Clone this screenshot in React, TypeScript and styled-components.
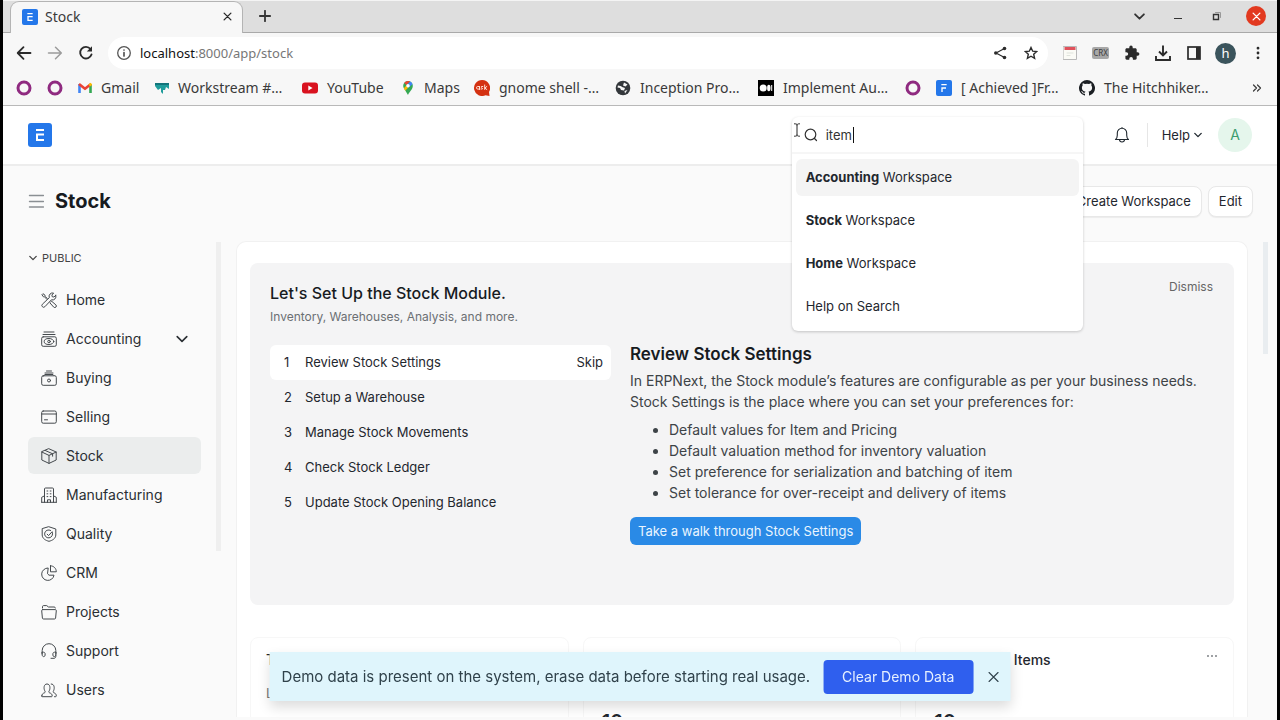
import React from "react";
import styled, { createGlobalStyle } from "styled-components";

const Global = createGlobalStyle`
  *, *::before, *::after { box-sizing: border-box; }
  html, body, #root { height: 100%; }
  body { margin: 0; background: #000; font-family: Inter, "Liberation Sans", sans-serif; color: #1f272e; }
  button, input { font: inherit; color: inherit; }
  h1, h2, h3, p, ul, ol { margin: 0; padding: 0; font-weight: inherit; }
  a { color: inherit; text-decoration: none; }
`;

const ubuntu = `"Noto Sans", "Open Sans", sans-serif`;

/* ---------- shared ---------- */
const Glyph = styled.svg.attrs<{ $size?: number }>((p) => ({
  fill: p.fill ?? "none",
  stroke: p.stroke ?? "currentColor",
  strokeLinecap: p.strokeLinecap ?? "round",
  strokeLinejoin: p.strokeLinejoin ?? "round",
}))<{ $size?: number }>`
  display: block;
  flex: none;
  width: ${(p) => p.$size ?? 16}px;
  height: ${(p) => p.$size ?? 16}px;
`;

const PlainButton = styled.button`
  display: flex;
  align-items: center;
  justify-content: center;
  border: 0;
  padding: 0;
  background: none;
`;

const Window = styled.div`
  height: 100vh;
  display: flex;
  flex-direction: column;
  overflow: hidden;
  border: solid #000;
  border-width: 0 3px;
  background: #fafafa;
`;

/* ---------- browser chrome ---------- */
const TabStrip = styled.div`
  flex: none;
  display: flex;
  align-items: flex-end;
  height: 33px;
  padding: 0 11px 0 7px;
  border-top: 1px solid #f4f4f4;
  background: #dedede;
  box-shadow: inset 0 -1px #a9a9a9;
  font-family: ${ubuntu};
`;

const Tab = styled.div`
  display: flex;
  align-items: center;
  width: 233px;
  height: 32px;
  padding: 0 5px 2px 11px;
  border: 1px solid #b4b4b4;
  border-bottom: 0;
  border-radius: 9px 9px 0 0;
  background: #f7f7f7;
  font-size: 14px;
`;

const TabTitle = styled.span`
  flex: 1;
  padding-left: 7px;
  color: #3a3a3a;
`;

const WindowControls = styled.div`
  display: flex;
  align-items: center;
  align-self: center;
  gap: 19px;
  margin: 0 0 2px auto;
`;

const ControlButton = styled(PlainButton)`
  width: 20px;
  height: 20px;
  color: #333;
`;

const CloseWindow = styled(ControlButton)`
  border-radius: 50%;
  background: #e2391f;
  color: #fff;
`;

const NewTab = styled(ControlButton)`
  align-self: center;
  margin: 0 0 2px 12px;
`;

const Toolbar = styled.div`
  flex: none;
  display: flex;
  align-items: center;
  gap: 12px;
  height: 40px;
  padding: 0 10px 0 11px;
  background: #f7f7f7;
`;

const ToolButton = styled(PlainButton)<{ $dim?: boolean }>`
  width: 19px;
  height: 24px;
  color: ${(p) => (p.$dim ? "#9c9c9c" : "#2b2b2b")};
`;

const AddressBar = styled.div`
  flex: 1;
  display: flex;
  align-items: center;
  gap: 12px;
  height: 32px;
  margin-left: 1px;
  padding: 0 8px;
  border-radius: 16px;
  background: #fff;
  font: 13px ${ubuntu};
  color: #777;
`;

const Url = styled.a`
  flex: 1;
  margin-left: -4px;
  b { font-weight: 400; color: #111; }
`;

const Profile = styled(PlainButton)`
  width: 21px;
  height: 21px;
  border-radius: 50%;
  background: #3b545c;
  color: #fff;
  font: 13px ${ubuntu};
`;

const CrxBadge = styled.span`
  width: 17px;
  border-radius: 2px;
  background: #a7a7a7;
  color: #3c3c3c;
  font: 8px/12px ${ubuntu};
  text-align: center;
`;

const Bookmarks = styled.nav`
  flex: none;
  display: flex;
  align-items: center;
  gap: 15px;
  height: 33px;
  padding: 0 15px 3px 13px;
  border-bottom: 1px solid #b9b9b9;
  background: #f7f7f7;
  font: 14px ${ubuntu};
  color: #3a3a3a;
`;

const Bookmark = styled.a<{ $width?: number }>`
  flex: none;
  display: flex;
  align-items: center;
  gap: 9px;
  width: ${(p) => p.$width ?? 16}px;
  white-space: nowrap;
`;

const More = styled(PlainButton)`
  margin-left: auto;
`;

/* ---------- app header ---------- */
const Header = styled.header`
  flex: none;
  display: flex;
  align-items: center;
  height: 60px;
  padding: 0 25px;
  border-bottom: 2px solid #ededed;
  background: #fff;
`;

const Search = styled.div`
  position: relative;
  width: 291px;
  margin: 0 31px 0 auto;
`;

const SearchField = styled.label`
  display: flex;
  align-items: center;
  gap: 8px;
  height: 36px;
  padding: 0 12px;
  font-size: 13px;
  color: #333;
`;

const SearchInput = styled.input`
  width: 200px;
  border: 0;
  padding: 0;
  outline: 0;
  background: none;
`;

const Typed = styled.span`
  position: relative;
`;

const Caret = styled.i`
  position: absolute;
  left: 27px;
  top: 0;
  width: 1px;
  height: 16px;
  background: #111;
`;

const Pointer = styled(Glyph)`
  position: absolute;
  left: -2px;
  top: 6px;
`;

const Suggestions = styled.ul`
  position: absolute;
  z-index: 3;
  top: 0;
  left: 0;
  right: 0;
  padding: 42px 4px 6px;
  border-radius: 6px;
  background: linear-gradient(#f6f6f6, #f6f6f6) 0 35px / 100% 2px no-repeat, #fff;
  box-shadow: 0 1px 3px rgba(0, 0, 0, 0.2);
  list-style: none;
  font-size: 13px;
`;

const Field = styled.div`
  position: relative;
  z-index: 4;
`;

const Suggestion = styled.li<{ $active?: boolean }>`
  padding: 0 10px;
  border-radius: 6px;
  line-height: 37px;
  background: ${(p) => (p.$active ? "#f4f4f4" : "none")};
  & + & { margin-top: 6px; }
  b { font-weight: 700; }
`;

const Divider = styled.i`
  width: 1px;
  height: 24px;
  margin: 0 14px 0 17px;
  background: #e6e6e6;
`;

const HelpButton = styled(PlainButton)`
  gap: 4px;
  margin-right: 16px;
  font-size: 13px;
`;

const Avatar = styled.span`
  width: 34px;
  border-radius: 50%;
  background: #e5f6ec;
  color: #3c9d6f;
  font-size: 14px;
  line-height: 34px;
  text-align: center;
`;

/* ---------- page ---------- */
const PageHead = styled.div`
  flex: none;
  display: flex;
  align-items: center;
  gap: 6px;
  height: 70px;
  padding: 0 24px 0 25px;
`;

const PageTitle = styled.h1`
  flex: 1;
  padding-left: 5px;
  font-size: 20px;
  font-weight: 700;
  color: #171b1f;
`;

const HeadButton = styled.button`
  height: 31px;
  padding: 0 10px;
  border: 1px solid #e8e8e8;
  border-radius: 8px;
  background: #fff;
  box-shadow: 0 1px 1px rgba(0, 0, 0, 0.06);
  font-size: 13px;
`;

const Body = styled.div`
  flex: 1;
  min-height: 0;
  display: flex;
  padding: 0 0 3px 25px;
`;

const Sidebar = styled.aside`
  flex: none;
  width: 173px;
  padding-top: 14px;
  overflow: hidden;
`;

const SectionToggle = styled(PlainButton)`
  gap: 5px;
  height: 16px;
  margin: 0 0 15px 1px;
  font-size: 11px;
  color: #444;
`;

const NavItem = styled.a<{ $active?: boolean }>`
  display: flex;
  align-items: center;
  gap: 9px;
  height: 37px;
  margin-bottom: 2px;
  padding: 0 13px;
  border-radius: 6px;
  background: ${(p) => (p.$active ? "#ebeded" : "none")};
  font-size: 14px;
  color: #2a2f33;
`;

const NavLabel = styled.span`
  flex: 1;
`;

const Scrollbar = styled.i<{ $length: number; $tone: string; $after: number }>`
  flex: none;
  width: 5px;
  height: ${(p) => p.$length}px;
  margin: 6px ${(p) => p.$after}px 0 15px;
  background: ${(p) => p.$tone};
`;

const Board = styled.main`
  flex: 1;
  min-width: 0;
  margin-top: 5px;
  padding: 21px 13px 0;
  border: 1px solid #f1f1f1;
  border-bottom: 0;
  border-radius: 10px 10px 0 0;
  background: #fff;
  overflow: hidden;
`;

const Onboarding = styled.section`
  min-height: 342px;
  padding: 19px 20px;
  border-radius: 8px;
  background: #f4f4f5;
`;

const OnboardingHead = styled.div`
  display: flex;
  justify-content: space-between;
  align-items: flex-start;
`;

const OnboardingTitle = styled.h2`
  font-size: 16px;
  line-height: 22px;
  font-weight: 500;
  color: #171b1f;
`;

const Subtitle = styled.p`
  padding-top: 4px;
  font-size: 12px;
  line-height: 17px;
  color: #6b6f73;
`;

const Dismiss = styled(PlainButton)`
  margin: -3px 1px 0 0;
  font-size: 12px;
  line-height: 16px;
  color: #666;
`;

const Columns = styled.div`
  display: grid;
  grid-template-columns: 341px 1fr;
  gap: 19px;
  margin-top: 20px;
`;

const Steps = styled.ol`
  list-style: none;
`;

const Step = styled.li<{ $active?: boolean }>`
  display: flex;
  height: 35px;
  line-height: 35px;
  padding: 0 8px 0 14px;
  border-radius: 6px;
  background: ${(p) => (p.$active ? "#fff" : "none")};
  font-size: 13px;
`;

const StepNumber = styled.span`
  width: 21px;
`;

const StepName = styled.span`
  flex: 1;
`;

const Detail = styled.div`
  font-size: 14px;
  line-height: 21px;
  color: #3d4347;
`;

const DetailTitle = styled.h3`
  margin-bottom: 7px;
  font-size: 17px;
  line-height: 18px;
  font-weight: 600;
  color: #171b1f;
`;

const Bullets = styled.ul`
  margin: 7px 0 14px;
  padding-left: 39px;
`;

const Walkthrough = styled.button`
  height: 28px;
  padding: 0 8px;
  border: 0;
  border-radius: 6px;
  background: #2a8ae6;
  color: #e9f5ff;
  font-size: 13px;
`;

const Cards = styled.div`
  display: grid;
  grid-template-columns: repeat(3, 1fr);
  gap: 14px;
  margin-top: 32px;
`;

const Card = styled.section`
  height: 120px;
  padding: 12px 15px;
  border: 1px solid #f7f7f7;
  border-radius: 8px;
`;

const CardHead = styled.div`
  display: flex;
  justify-content: space-between;
  font-size: 14px;
  line-height: 20px;
  font-weight: 500;
`;

const CardNumber = styled.p`
  padding: 40px 3px 0;
  font-size: 20px;
  line-height: 24px;
  font-weight: 600;
`;

const CardNote = styled.p`
  padding-top: 13px;
  font-size: 13px;
  line-height: 20px;
  color: #777;
`;

const CardMenu = styled(PlainButton)`
  height: 12px;
`;

const Toast = styled.div`
  position: fixed;
  z-index: 5;
  left: 50%;
  bottom: 19px;
  transform: translateX(-50%);
  display: flex;
  align-items: center;
  height: 49px;
  padding: 0 11px 0 12px;
  background: #dff5fc;
  box-shadow: 0 6px 12px rgba(0, 0, 0, 0.14);
  font-size: 15px;
  white-space: nowrap;
  color: #30424b;
`;

const ClearButton = styled.button`
  height: 34px;
  margin: 0 14px 0 13px;
  padding: 0 19px;
  border: 0;
  border-radius: 4px;
  background: #2f5fee;
  color: #e6f0ff;
  font-size: 14px;
`;

/* ---------- icons ---------- */
const Brand = ({ size, letter = "E" }: { size: number; letter?: "E" | "F" }) => (
  <Glyph $size={size} viewBox="0 0 24 24">
    <rect width="24" height="24" rx="3" fill="#2477ea" stroke="none" />
    <path
      d={letter === "E" ? "M8 7h8M16 11.5H9V17h7" : "M8 7h8M15 12H9v6"}
      stroke="#fff" strokeWidth="2" strokeLinecap="butt" strokeLinejoin="miter"
    />
  </Glyph>
);

const Ring = () => (
  <Glyph viewBox="0 0 16 16"><circle cx="8" cy="8" r="6" stroke="#8f2a80" strokeWidth="3" /></Glyph>
);

const Chevron = ({ size = 8, weight = 1.3 }: { size?: number; weight?: number }) => (
  <Glyph $size={size} viewBox="0 0 8 8"><path d="M.8 2.4 4 5.6l3.2-3.2" strokeWidth={weight} vectorEffect="non-scaling-stroke" /></Glyph>
);

const Cross = ({ size, weight }: { size: number; weight: number }) => (
  <Glyph $size={size} viewBox="0 0 12 12"><path d="M1.5 1.5l9 9M10.5 1.5l-9 9" strokeWidth={weight} /></Glyph>
);

const navIcons: Record<string, React.ReactNode> = {
  Home: (
    <>
      <path d="M6.2 6.400 4.200 4.400 4 3.200 1.900 1.700.9 2.700 2.400 4.800l1.200.2 2 2M9.600 10.200l1-1 4.300 3.700a1.500 1.500 0 0 1-2.200 2.200L9 11" />
      <path d="M14.800 3.400 12.900 5l-1.700-.300-.300-1.700 1.700-1.900a3.500 3.500 0 0 0-4.300 4.600L1.400 12.200a1.700 1.700 0 0 0 2.500 2.500l6.500-6.900a3.500 3.500 0 0 0 4.400-4.400Z" />
    </>
  ),
  Accounting: (
    <>
      <path d="M3 1h10M2 3.500h12" />
      <rect x=".7" y="5.800" width="14.600" height="9.500" rx="1.500" />
      <ellipse cx="8" cy="10.500" rx="4.800" ry="3" />
      <circle cx="8" cy="10.500" r="1.300" />
    </>
  ),
  Buying: (
    <>
      <path d="M5.500 1h5M4 3h8M3 5.500 4 4.500h8l1 1" />
      <rect x=".7" y="5.800" width="14.600" height="9.500" rx="1.500" />
      <circle cx="8" cy="10.500" r="1.500" />
    </>
  ),
  Selling: (
    <>
      <rect x=".7" y="2" width="14.600" height="12.200" rx="1.500" />
      <path d="M.7 5h14.600M3.500 10.800h3" />
    </>
  ),
  Stock: (
    <path d="M8 .8 15.200 4v8L8 15.400.8 12V4ZM.8 4 8 7.400 15.200 4M8 7.400v8M4.300 2.500l7.300 3.300v2.400" />
  ),
  Manufacturing: (
    <>
      <path d="M3.500 15.300V2a1 1 0 0 1 1-1h7a1 1 0 0 1 1 1v13.300M.7 15.300v-5l2.800-1.500M15.300 15.300v-5l-2.800-1.500M.7 15.300h14.600M6.500 15.300v-2.500h3v2.500" />
      <path d="M6 4h.8M9.200 4h.8M6 6.800h.8M9.200 6.800h.8M6 9.600h.8M9.200 9.600h.8" />
    </>
  ),
  Quality: (
    <>
      <path d="M8 .8 14.800 3v6c0 3.500-3.500 5.500-6.800 6.300C4.700 14.500 1.200 12.500 1.200 9V3Z" />
      <path d="M11.300 6.300a4 4 0 1 1-1.700-1.900M6.200 8.200l1.400 1.400L11 5.800" />
    </>
  ),
  CRM: (
    <>
      <path d="M6.800 3A6.200 6.200 0 1 0 13 10.200H8L6.800 9Z" />
      <path d="M9.500.8v6h5.800C15.300 3.500 12.800.8 9.500.8Z" />
    </>
  ),
  Projects: (
    <>
      <path d="M1.500 4V2.600c0-.6.400-1 1-1h3.200L7.500 3h5.700c.7 0 1.200.5 1.200 1" />
      <path d="M1.700 5.600h12.600c.7 0 1.100.5 1 1.100l-.7 7.300c0 .6-.5 1-1.100 1h-11c-.6 0-1.100-.4-1.100-1L.7 6.700c0-.6.400-1.100 1-1.100Z" />
    </>
  ),
  Support: (
    <>
      <path d="M1.200 11V7.500a6.800 6.800 0 0 1 13.600 0V11M14.800 12v1.500c0 1-.8 1.800-1.800 1.800h-3" />
      <path d="M1.200 9.200h1.300c.9 0 1.600.7 1.600 1.600v1.400c0 .8-.6 1.400-1.400 1.400-.8 0-1.500-.6-1.500-1.400ZM14.800 9.200h-1.300c-.9 0-1.600.7-1.600 1.600v1.400c0 .8.6 1.400 1.400 1.400.8 0 1.500-.6 1.500-1.400Z" />
    </>
  ),
  Users: (
    <>
      <path d="M.8 14c0-2 1.200-2.700 2.900-3.300.8-.4.500-1.300 0-2C2.600 6.500 2.700 2 6 2s3.400 4.500 2.300 6.700c-.5.700-.8 1.600 0 2 1.700.6 2.900 1.300 2.900 3.300 0 .4-.3.700-.7.700h-9c-.4 0-.7-.3-.7-.7Z" />
      <path d="M10.200 2c3.200-.3 3.600 4.200 2.400 6.700-.4.700-.6 1.500.1 2 1.600.6 2.600 1.300 2.600 3.200 0 .5-.3.800-.8.800h-1" />
    </>
  ),
};

const bookmarks: { label?: string; width?: number; icon: React.ReactNode }[] = [
  { icon: <Ring /> },
  { icon: <Ring /> },
  {
    label: "Gmail", width: 62,
    icon: (
      <Glyph $size={14} viewBox="0 0 14 14" strokeWidth="2.6" strokeLinecap="butt">
        <path d="M1.500 12V3" stroke="#4285f4" /><path d="M12.500 12V3" stroke="#34a853" />
        <path d="M1 3l6 4.800L13 3" stroke="#ea4335" /><path d="M11.200 4.500 13.500 2.700" stroke="#fbbc04" />
      </Glyph>
    ),
  },
  {
    label: "Workstream #…", width: 132,
    icon: (
      <Glyph $size={14} viewBox="0 0 14 14" stroke="none">
        <path d="M0 2h14v6l-3-2-1 3H8v4l-2-2V7L3 9 0 5Z" fill="#1f9c9b" /><path d="M0 2h14v2H0Z" fill="#12747a" />
      </Glyph>
    ),
  },
  {
    label: "YouTube", width: 84,
    icon: (
      <Glyph viewBox="0 0 16 16" stroke="none">
        <rect y="2.500" width="16" height="11" rx="3" fill="#d9121f" /><path d="M6.300 5.500v5l4.300-2.500Z" fill="#fff" />
      </Glyph>
    ),
  },
  {
    label: "Maps", width: 58,
    icon: (
      <Glyph $size={14} viewBox="1 0 14 16" stroke="none">
        <path d="M8 0a5.500 5.500 0 0 0-5.500 5.500c0 1 .3 2 .8 2.800L8 16c.8-3 5.500-6 5.500-10.500A5.500 5.500 0 0 0 8 0Z" fill="#34a853" />
        <path d="M8 0a5.500 5.500 0 0 0-4.300 2L6 4.500 10.500.6A5.500 5.500 0 0 0 8 0Z" fill="#ea4335" />
        <path d="M10.500.6 6 5.500l2 2.500 5.200-4.300A5.500 5.500 0 0 0 10.500.6Z" fill="#4285f4" />
        <path d="M3.300 8.300 6 5l2 2.800-3.200 3.300Z" fill="#fbbc04" /><circle cx="8" cy="5.500" r="2" fill="#fff" />
      </Glyph>
    ),
  },
  {
    label: "gnome shell -…", width: 126,
    icon: (
      <Glyph viewBox="0 0 16 16" stroke="none">
        <path d="M8 0a8 8 0 1 0 3.500 15.200l4 .8-.5-4A8 8 0 0 0 8 0Z" fill="#d43111" />
        <path d="M5.500 6.500H3.800a1.300 1.300 0 0 0 0 2.600h1.700V6.500v3M8.800 6.500H7.400c-1 1.300 1.400 1 1 2.500H7M10.700 5v4.500M12.800 6.500l-2 1.500 2 1.500" fill="none" stroke="#ffe0d6" />
      </Glyph>
    ),
  },
  {
    label: "Inception Pro…", width: 128,
    icon: (
      <Glyph viewBox="0 0 16 16" stroke="none">
        <circle cx="8" cy="8" r="7.300" fill="#33373b" />
        <path d="M3 5.500c2 .5 3 0 4 1.500l3 1-1 2.500-3-.5-1-2-2.500-.5ZM9 2.500l3.500 2-2 2-2.500-1ZM9.500 11l3-1-2.500 3.500Z" fill="#f7f7f7" />
      </Glyph>
    ),
  },
  {
    label: "Implement Au…", width: 132,
    icon: (
      <Glyph viewBox="0 0 16 16" stroke="none">
        <rect width="16" height="16" fill="#000" /><circle cx="5.200" cy="8" r="3.500" fill="#fff" />
        <ellipse cx="10.800" cy="8" rx="1.700" ry="3.200" fill="#fff" /><rect x="13.200" y="5" width="1" height="6" fill="#fff" />
      </Glyph>
    ),
  },
  { icon: <Ring /> },
  { label: "[ Achieved ]Fr…", width: 128, icon: <Brand size={16} letter="F" /> },
  {
    label: "The Hitchhiker…", width: 136,
    icon: (
      <Glyph viewBox="0 0 16 16" stroke="none">
        <path
          fill="#1b1f23"
          d="M8 0a8 8 0 0 0-2.500 15.600c.4.100.5-.2.500-.4v-1.500c-2.200.5-2.700-.9-2.700-.9-.4-.9-.9-1.200-.9-1.200-.7-.5.100-.5.100-.5.800.1 1.200.8 1.200.8.700 1.200 1.900.9 2.300.7.100-.5.300-.9.500-1.100-1.800-.2-3.600-.9-3.600-4 0-.9.300-1.600.8-2.100-.1-.2-.4-1 .1-2.100 0 0 .7-.2 2.200.8a7.600 7.600 0 0 1 4 0c1.500-1 2.200-.8 2.200-.8.400 1.100.2 1.900.1 2.100.5.600.8 1.300.8 2.100 0 3.100-1.900 3.800-3.700 4 .3.300.6.800.6 1.500v2.200c0 .2.100.5.500.4A8 8 0 0 0 8 0Z"
        />
      </Glyph>
    ),
  },
];

const suggestions = [
  ["Accounting", " Workspace"],
  ["Stock", " Workspace"],
  ["Home", " Workspace"],
  ["", "Help on Search"],
];

const steps = [
  "Review Stock Settings",
  "Setup a Warehouse",
  "Manage Stock Movements",
  "Check Stock Ledger",
  "Update Stock Opening Balance",
];

const Dots = () => (
  <Glyph $size={12} viewBox="0 0 12 12" strokeWidth="1.600"><path d="M2 6h.01M6 6h.01M10 6h.01" /></Glyph>
);

function BrowserChrome() {
  return (
    <>
      <TabStrip>
        <Tab>
          <Brand size={16} />
          <TabTitle>Stock</TabTitle>
          <ToolButton aria-label="Close tab"><Cross size={9} weight={1.8} /></ToolButton>
        </Tab>
        <NewTab aria-label="New tab">
          <Glyph $size={12} viewBox="0 0 12 12" strokeWidth="1.800"><path d="M6 .8v10.400M.8 6h10.400" /></Glyph>
        </NewTab>
        <WindowControls>
          <ControlButton aria-label="Search tabs"><Chevron size={11} weight={1.8} /></ControlButton>
          <ControlButton aria-label="Minimize">
            <Glyph $size={12} viewBox="0 0 12 12" strokeLinecap="butt"><path d="M2 8.500h8" /></Glyph>
          </ControlButton>
          <ControlButton aria-label="Restore">
            <Glyph $size={10} viewBox="0 0 10 10" strokeLinejoin="miter">
              <path d="M1.500 3.500h5v5h-5Z" strokeWidth="1.400" /><path d="M3.500 1.500h5v5" stroke="#999" />
            </Glyph>
          </ControlButton>
          <CloseWindow aria-label="Close window"><Cross size={9} weight={1.8} /></CloseWindow>
        </WindowControls>
      </TabStrip>
      <Toolbar>
        <ToolButton aria-label="Back">
          <Glyph viewBox="0 0 16 16" strokeWidth="1.800"><path d="M14.500 8H2M7.500 2.200 1.700 8l5.800 5.800" /></Glyph>
        </ToolButton>
        <ToolButton aria-label="Forward" $dim>
          <Glyph viewBox="0 0 16 16" strokeWidth="1.500"><path d="M1.500 8H14M8.500 2.200 14.300 8l-5.800 5.800" /></Glyph>
        </ToolButton>
        <ToolButton aria-label="Reload">
          <Glyph viewBox="0 0 16 16" strokeWidth="1.900">
            <path d="M13.500 9.500A5.800 5.800 0 1 1 12.500 4" /><path d="M14 1.200v5.300H8.800Z" fill="currentColor" stroke="none" />
          </Glyph>
        </ToolButton>
        <AddressBar>
          <Glyph viewBox="0 0 16 16" strokeWidth="1.300" stroke="#555">
            <circle cx="8" cy="8" r="6.300" /><path d="M8 7.500v3.500M8 5h.01" strokeWidth="1.700" />
          </Glyph>
          <Url href="#"><b>localhost</b>:8000/app/stock</Url>
          <ToolButton aria-label="Share">
            <Glyph $size={14} viewBox="0 0 14 14" strokeWidth="1.200">
              <path d="M11.500 2.500 3 7l8.500 4.500" />
              <g fill="currentColor" stroke="none"><circle cx="11.500" cy="2.500" r="1.800" /><circle cx="2.800" cy="7" r="1.800" /><circle cx="11.500" cy="11.500" r="1.800" /></g>
            </Glyph>
          </ToolButton>
          <ToolButton aria-label="Bookmark this tab">
            <Glyph $size={14} viewBox="0 0 14 14" strokeWidth="1.400" strokeLinejoin="miter">
              <path d="m7 1.500 1.700 3.700 4 .4-3 2.700.9 4L7 10.200l-3.600 2.100.9-4-3-2.700 4-.4Z" />
            </Glyph>
          </ToolButton>
        </AddressBar>
        <ToolButton aria-label="Calendar extension">
          <Glyph $size={14} viewBox="0 0 14 14">
            <rect x=".5" y=".5" width="13" height="13" fill="#fbfbf6" stroke="#b9b9b9" />
            <path d="M1.500 2.500h11" stroke="#e0525c" strokeWidth="3" strokeLinecap="butt" /><path d="M4 7h6M4 9.500h3" stroke="#dfe3dc" />
          </Glyph>
        </ToolButton>
        <ToolButton aria-label="CRX extension"><CrxBadge>CRX</CrxBadge></ToolButton>
        <ToolButton aria-label="Extensions">
          <Glyph viewBox="0 0 16 16" stroke="none">
            <path fill="currentColor" d="M13.700 7.300h-1V4.700c0-.8-.6-1.400-1.400-1.400H8.700v-1a1.700 1.700 0 0 0-3.400 0v1H2.700c-.7 0-1.300.6-1.300 1.400v2.500h1a1.800 1.800 0 0 1 0 3.600h-1v2.500c0 .8.600 1.400 1.300 1.400h2.600v-1a1.800 1.800 0 0 1 3.600 0v1h2.400c.8 0 1.400-.6 1.400-1.400v-2.600h1a1.700 1.700 0 0 0 0-3.400Z" />
          </Glyph>
        </ToolButton>
        <ToolButton aria-label="Downloads">
          <Glyph viewBox="0 0 16 16" strokeWidth="1.900" strokeLinecap="butt" strokeLinejoin="miter">
            <path d="M8 .5v9M4 6.500l4 4 4-4M1 11v4h14v-4" />
          </Glyph>
        </ToolButton>
        <ToolButton aria-label="Side panel">
          <Glyph $size={14} viewBox="0 0 14 14" strokeWidth="1.700" strokeLinejoin="miter">
            <rect x="1" y="1" width="12" height="12" /><path d="M9 1h4v12H9Z" fill="currentColor" stroke="none" />
          </Glyph>
        </ToolButton>
        <Profile aria-label="Profile">h</Profile>
        <ToolButton aria-label="Browser menu">
          <Glyph viewBox="0 0 16 16" strokeWidth="2.800"><path d="M8 3.200h.01M8 8h.01M8 12.800h.01" /></Glyph>
        </ToolButton>
      </Toolbar>
      <Bookmarks>
        {bookmarks.map((b, i) => (
          <Bookmark key={i} href="#" $width={b.width}>{b.icon}{b.label}</Bookmark>
        ))}
        <More aria-label="More bookmarks">
          <Glyph $size={10} viewBox="0 0 10 10" strokeWidth="1.200"><path d="m1.500 2 3 3-3 3M5.500 2l3 3-3 3" /></Glyph>
        </More>
      </Bookmarks>
    </>
  );
}

export default function App() {
  return (
    <Window>
      <Global />
      <BrowserChrome />
      <Header>
        <Brand size={24} />
        <Search>
          <Field>
            <SearchField>
              <Glyph $size={14} viewBox="0 0 14 14" strokeWidth="1.200"><circle cx="6.500" cy="6.500" r="5.300" /><path d="m10.500 10.500 2 2" /></Glyph>
              <Typed>
                <SearchInput aria-label="Search" defaultValue="item" />
                <Caret />
              </Typed>
            </SearchField>
            <Pointer $size={14} viewBox="0 0 14 14" stroke="#222"><path d="M4.500.8c2 0 2.500.4 2.500 1.200v10c0 .8-.5 1.200-2.500 1.200M9.500.8C7.500.8 7 1.200 7 2M9.500 13.200C7.500 13.200 7 12.800 7 12" /></Pointer>
          </Field>
          <Suggestions>
            {suggestions.map(([strong, rest], i) => (
              <Suggestion key={i} $active={i === 0}><b>{strong}</b>{rest}</Suggestion>
            ))}
          </Suggestions>
        </Search>
        <PlainButton aria-label="Notifications">
          <Glyph viewBox="0 0 16 16" strokeWidth="1.100">
            <path d="M1.500 12.500h13c-1.500-1.200-1.800-2.500-1.800-4.300V6a4.700 4.700 0 0 0-9.400 0v2.200c0 1.800-.3 3.100-1.800 4.300ZM5.500 12.800c.2 3 4.800 3 5 0M8 1.200V.5" />
          </Glyph>
        </PlainButton>
        <Divider />
        <HelpButton>Help <Chevron /></HelpButton>
        <Avatar>A</Avatar>
      </Header>
      <PageHead>
        <PlainButton aria-label="Toggle sidebar">
          <Glyph viewBox="0 0 16 16" stroke="#8a8f93" strokeWidth="1.400"><path d="M1.500 2.500h14M1.500 8.500h14M1.500 14h14" /></Glyph>
        </PlainButton>
        <PageTitle>Stock</PageTitle>
        <HeadButton>Create Workspace</HeadButton>
        <HeadButton>Edit</HeadButton>
      </PageHead>
      <Body>
        <Sidebar>
          <SectionToggle><Chevron />PUBLIC</SectionToggle>
          <nav>
            {Object.entries(navIcons).map(([name, icon]) => (
              <NavItem key={name} href="#" $active={name === "Stock"}>
                <Glyph viewBox="0 0 16 16" stroke="#44494d">{icon}</Glyph>
                <NavLabel>{name}</NavLabel>
                {name === "Accounting" && <Chevron size={12} weight={1.6} />}
              </NavItem>
            ))}
          </nav>
        </Sidebar>
        <Scrollbar $length={309} $tone="#efefef" $after={15} />
        <Board>
          <Onboarding>
            <OnboardingHead>
              <div>
                <OnboardingTitle>Let's Set Up the Stock Module.</OnboardingTitle>
                <Subtitle>Inventory, Warehouses, Analysis, and more.</Subtitle>
              </div>
              <Dismiss>Dismiss</Dismiss>
            </OnboardingHead>
            <Columns>
              <Steps>
                {steps.map((s, i) => (
                  <Step key={s} $active={i === 0}>
                    <StepNumber>{i + 1}</StepNumber>
                    <StepName>{s}</StepName>
                    {i === 0 && <PlainButton>Skip</PlainButton>}
                  </Step>
                ))}
              </Steps>
              <Detail>
                <DetailTitle>Review Stock Settings</DetailTitle>
                <p>In ERPNext, the Stock module’s features are configurable as per your business needs.</p>
                <p>Stock Settings is the place where you can set your preferences for:</p>
                <Bullets>
                  <li>Default values for Item and Pricing</li>
                  <li>Default valuation method for inventory valuation</li>
                  <li>Set preference for serialization and batching of item</li>
                  <li>Set tolerance for over-receipt and delivery of items</li>
                </Bullets>
                <Walkthrough>Take a walk through Stock Settings</Walkthrough>
              </Detail>
            </Columns>
          </Onboarding>
          <Cards>
            <Card>
              <CardHead>Total Stock Value</CardHead>
              <CardNote>Loading...</CardNote>
            </Card>
            <Card>
              <CardHead>Total Warehouses</CardHead>
              <CardNumber>10</CardNumber>
            </Card>
            <Card>
              <CardHead>Total Active Items<CardMenu aria-label="Card menu"><Dots /></CardMenu></CardHead>
              <CardNumber>10</CardNumber>
            </Card>
          </Cards>
        </Board>
        <Scrollbar $length={112} $tone="#e9edf0" $after={9} />
      </Body>
      <Toast role="status">
        Demo data is present on the system, erase data before starting real usage.
        <ClearButton>Clear Demo Data</ClearButton>
        <PlainButton aria-label="Dismiss message"><Cross size={12} weight={1.1} /></PlainButton>
      </Toast>
    </Window>
  );
}
